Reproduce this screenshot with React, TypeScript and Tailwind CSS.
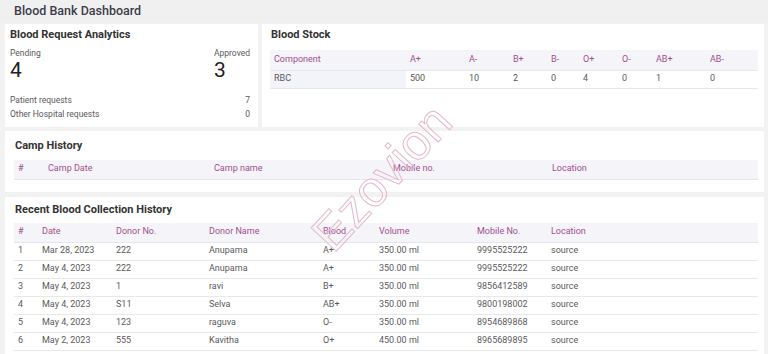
import React from "react";

const hdr = "text-[#a24f8e]";

function StockTable() {
  const cols = ["Component", "A+", "A-", "B+", "B-", "O+", "O-", "AB+", "AB-"];
  const vals = ["RBC", "500", "10", "2", "0", "4", "0", "1", "0"];
  const grid = "grid w-full grid-cols-[136px_59px_44px_38px_32px_39px_34px_54px_1fr]";
  return (
    <div className="mt-[6px] text-[9px] w-full">
      <div className={`${grid} h-[21px] items-center bg-[#f4f4f9] border-b border-[#e6e6ee] ${hdr}`}>
        {cols.map((c) => (
          <div key={c} className="px-[4px]">{c}</div>
        ))}
      </div>
      <div className={`${grid} h-[18px] border-b border-[#e8e8e8] text-[#5a5a5a]`}>
        {vals.map((v, i) => (
          <div key={i} className={`px-[4px] flex items-center ${i === 0 ? "bg-[#f3f3fa]" : ""}`}>{v}</div>
        ))}
      </div>
    </div>
  );
}

function CampTable() {
  const grid = "grid grid-cols-[30px_166px_179px_159px_1fr]";
  return (
    <div className={`${grid} mt-[5px] h-[20px] items-center bg-[#f4f4f9] border-b border-[#e6e6ee] text-[9px] ${hdr}`}>
      {["#", "Camp Date", "Camp name", "Mobile no.", "Location"].map((c) => (
        <div key={c} className="px-[4px]">{c}</div>
      ))}
    </div>
  );
}

const rows = [
  ["1", "Mar 28, 2023", "222", "Anupama", "A+", "350.00 ml", "9995525222", "source"],
  ["2", "May 4, 2023", "222", "Anupama", "A+", "350.00 ml", "9995525222", "source"],
  ["3", "May 4, 2023", "1", "ravi", "B+", "350.00 ml", "9856412589", "source"],
  ["4", "May 4, 2023", "S11", "Selva", "AB+", "350.00 ml", "9800198002", "source"],
  ["5", "May 4, 2023", "123", "raguva", "O-", "350.00 ml", "8954689868", "source"],
  ["6", "May 2, 2023", "555", "Kavitha", "O+", "450.00 ml", "8965689895", "source"],
];

function CollectionTable() {
  const grid = "grid grid-cols-[24px_74px_93px_114px_56px_98px_74px_1fr]";
  return (
    <div className="mt-[4px] text-[9px]">
      <div className={`${grid} h-[20px] items-center bg-[#f4f4f9] border-b border-[#e6e6ee] ${hdr}`}>
        {["#", "Date", "Donor No.", "Donor Name", "Blood", "Volume", "Mobile No.", "Location"].map((c) => (
          <div key={c} className="px-[4px]">{c}</div>
        ))}
      </div>
      {rows.map((r) => (
        <div key={r[0]} className={`${grid} h-[18px] items-center border-b border-[#e8e8e8] text-[#5a5a5a]`}>
          {r.map((v, i) => (
            <div key={i} className="px-[4px]">{v}</div>
          ))}
        </div>
      ))}
    </div>
  );
}

export default function App() {
  return (
    <div
      className="relative w-[768px] h-[354px] overflow-hidden bg-[#f2f2f2] text-[#333]"
      style={{ fontFamily: "Roboto, 'Liberation Sans', sans-serif" }}
    >
      <div className="h-[23px] flex items-center px-[14px] text-[12.5px] font-medium text-[#3d3d4a] bg-[#f0f0f0]">
        Blood Bank Dashboard
      </div>
      <div className="flex gap-[4px] pl-[5px] pr-[4px] mt-[1px]">
        <div className="w-[253px] h-[103px] bg-white px-[5px] pt-[3px] flex flex-col">
          <div className="text-[11px] font-bold text-[#333]">Blood Request Analytics</div>
          <div className="flex justify-between mt-[4px] pr-[3px]">
            <div className="flex flex-col">
              <span className="text-[8.5px] text-[#5a5a5a] leading-[10px]">Pending</span>
              <span className="text-[21px] leading-[24px] text-[#222]">4</span>
            </div>
            <div className="flex flex-col">
              <span className="text-[8.5px] text-[#5a5a5a] leading-[10px]">Approved</span>
              <span className="text-[21px] leading-[24px] text-[#222]">3</span>
            </div>
          </div>
          <div className="mt-[11px] flex justify-between pr-[3px] text-[8.5px] text-[#5a5a5a] leading-[14px]">
            <span>Patient requests</span>
            <span>7</span>
          </div>
          <div className="flex justify-between pr-[3px] text-[8.5px] text-[#5a5a5a] leading-[14px]">
            <span>Other Hospital requests</span>
            <span>0</span>
          </div>
        </div>
        <div className="flex-1 h-[103px] bg-white pl-[8px] pr-[6px] pt-[3px]">
          <div className="text-[11px] font-bold text-[#333] pl-[1px]">Blood Stock</div>
          <StockTable />
        </div>
      </div>
      <div className="ml-[5px] mr-[4px] mt-[4px] h-[61px] bg-white pl-[9px] pr-[6px] pt-[7px]">
        <div className="text-[11px] font-bold text-[#333] pl-[1px]">Camp History</div>
        <CampTable />
      </div>
      <div className="ml-[5px] mr-[4px] mt-[5px] h-[160px] bg-white pl-[9px] pr-[6px] pt-[5px]">
        <div className="text-[11px] font-bold text-[#333] pl-[1px]">Recent Blood Collection History</div>
        <CollectionTable />
      </div>
      <div className="absolute left-[382px] top-[178px] pointer-events-none">
        <div
          className="-translate-x-1/2 -translate-y-1/2 -rotate-[47deg] text-[50px] text-transparent [-webkit-text-stroke:1px_#e4b8c9] whitespace-nowrap"
          style={{ fontFamily: "'Liberation Sans', sans-serif" }}
        >
          Ezovion
        </div>
      </div>
    </div>
  );
}
